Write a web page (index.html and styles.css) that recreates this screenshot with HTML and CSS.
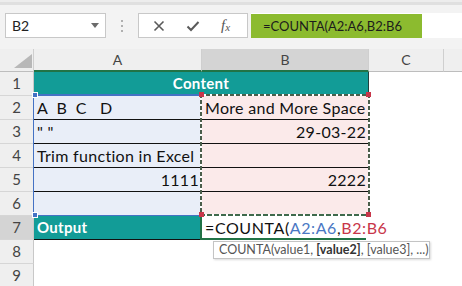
FILE: index.html
```html
<!DOCTYPE html>
<html>
<head>
<meta charset="utf-8">
<link rel="stylesheet" href="styles.css">
</head>
<body>
<div class="toolbar">
  <div class="namebox"><span>B2</span><svg class="dd" width="8" height="5" viewBox="0 0 8 5"><path d="M0 0H8L4 5Z" fill="#6b6b6b"/></svg></div>
  <div class="sep"><i></i><i></i><i></i></div>
  <div class="fxbox">
    <svg width="12" height="12" viewBox="0 0 12 12"><path d="M1.5 1.5L10.5 10.5M10.5 1.5L1.5 10.5" stroke="#5a5a5a" stroke-width="1.6" fill="none"/></svg>
    <svg width="14" height="12" viewBox="0 0 14 12"><path d="M1.5 6.5L5 10L12.5 2" stroke="#5a5a5a" stroke-width="2" fill="none"/></svg>
    <span class="fx">f<sub>x</sub></span>
  </div>
  <div class="formula"><span class="fhl">=COUNTA(A2:A6,B2:B6</span></div>
</div>
<div class="sheet">
  <div class="corner"><svg width="18" height="14" viewBox="0 0 18 14"><path d="M18 0V14H0Z" fill="#b8b8b8"/></svg></div>
  <div class="ch act">A</div>
  <div class="ch act sel">B</div>
  <div class="ch">C</div>
  <div class="ch last"></div>

  <div class="rh">1</div>
  <div class="c title">Content</div>
  <div class="c"></div>
  <div class="c"></div>

  <div class="rh">2</div>
  <div class="c ca bb pre">A  B  C   D</div>
  <div class="c cb bb">More and More Space</div>
  <div class="c"></div>
  <div class="c"></div>

  <div class="rh">3</div>
  <div class="c ca bb">" "</div>
  <div class="c cb bb r">29-03-22</div>
  <div class="c"></div>
  <div class="c"></div>

  <div class="rh">4</div>
  <div class="c ca bb">Trim function in Excel</div>
  <div class="c cb bb"></div>
  <div class="c"></div>
  <div class="c"></div>

  <div class="rh">5</div>
  <div class="c ca bb r">1111</div>
  <div class="c cb bb r">2222</div>
  <div class="c"></div>
  <div class="c"></div>

  <div class="rh">6</div>
  <div class="c ca"></div>
  <div class="c cb"></div>
  <div class="c"></div>
  <div class="c"></div>

  <div class="rh sel">7</div>
  <div class="c out bb">Output</div>
  <div class="c edit">=COUNTA(<span class="rb">A2:A6</span>,<span class="rr">B2:B6</span></div>
  <div class="c"></div>
  <div class="c"></div>

  <div class="rh">8</div>
  <div class="c"></div>
  <div class="c"></div>
  <div class="c"></div>
  <div class="c"></div>

  <div class="rh">9</div>
  <div class="c"></div>
  <div class="c"></div>
  <div class="c"></div>
  <div class="c"></div>

  <div class="rng-a"></div>
  <div class="marq"></div>
  <div class="active"></div>
  <div class="hb h1"></div>
  <div class="hb h2"></div>
  <div class="hr h3"></div>
  <div class="hr h4"></div>
  <div class="hr h5"></div>
  <div class="hr h6"></div>
  <div class="tip">COUNTA(value1, <b>[value2]</b>, [value3], ...)</div>
</div>
</body>
</html>
```
FILE: styles.css
```css
body {
  margin: 0;
  width: 462px;
  height: 286px;
  overflow: hidden;
  background: #fff;
  font-family: Lato, "Noto Sans", sans-serif;
}
.toolbar {
  height: 49px;
  box-sizing: border-box;
  padding: 13px 0 0 5px;
  display: flex;
  align-items: flex-start;
  background: linear-gradient(#ededed 0 2px, #e0e0e0 2px 5px, #f3f3f3 5px);
}
.namebox {
  width: 101px;
  height: 25px;
  box-sizing: border-box;
  background: #fff;
  border: 1px solid #c8c8c8;
  display: flex;
  align-items: center;
  justify-content: space-between;
  padding: 0 6px 0 6px;
  font-size: 14px;
  color: #222;
}
.sep {
  width: 2px;
  margin: 7px 15px 0 15px;
  display: flex;
  flex-direction: column;
  gap: 3px;
}
.sep i {
  width: 2px;
  height: 2px;
  background: #b0b0b0;
}
.fxbox {
  width: 110px;
  height: 25px;
  box-sizing: border-box;
  background: #fff;
  border: 1px solid #c8c8c8;
  display: flex;
  align-items: center;
  padding-left: 14px;
  gap: 21px;
}
.fx {
  font-family: "Liberation Serif", serif;
  font-style: italic;
  font-size: 15px;
  color: #555;
  margin-left: 0;
}
.fx sub {
  font-size: 11px;
  vertical-align: -1px;
}
.formula {
  flex: 1;
  height: 25px;
  margin-left: 3px;
  background: #fff;
  display: flex;
  align-items: flex-end;
}
.fhl {
  width: 171px;
  height: 24px;
  box-sizing: border-box;
  background: #8cbb2f;
  padding-left: 12px;
  font-size: 13px;
  line-height: 24px;
  color: #1c1c1c;
}
.sheet {
  position: relative;
  display: grid;
  grid-template-columns: 34px 168px 167px 75px 1fr;
  grid-template-rows: 23px repeat(9, 24px);
}
.corner {
  background: #efefef;
  border-right: 1px solid #cfcfcf;
  border-bottom: 1px solid #bdbdbd;
  box-sizing: border-box;
  display: flex;
  align-items: flex-end;
  justify-content: flex-end;
  padding: 0 1px 3px 0;
}
.ch {
  background: #efefef;
  border-right: 1px solid #cfcfcf;
  border-bottom: 1px solid #bdbdbd;
  box-sizing: border-box;
  text-align: center;
  font-size: 14px;
  line-height: 22px;
  color: #444;
}
.ch.act {
  border-bottom: 2px solid #217346;
  line-height: 21px;
}
.ch.sel {
  background: #d4d4d4;
}
.ch.last {
  border-right: none;
}
.rh {
  background: #efefef;
  border-right: 1px solid #c8c8c8;
  border-bottom: 1px solid #d6d6d6;
  box-sizing: border-box;
  text-align: center;
  font-size: 15px;
  line-height: 23px;
  color: #444;
}
.rh.sel {
  background: #d4d4d4;
}
.c {
  box-sizing: border-box;
  font-size: 16px;
  line-height: 23px;
  padding: 0 3px;
  white-space: nowrap;
  overflow: hidden;
  color: #111;
  letter-spacing: 0.3px;
}
.pre {
  white-space: pre;
}
.r {
  text-align: right;
}
.ca {
  background: #e9eef8;
}
.cb {
  background: #fbeaea;
}
.bb {
  border-bottom: 1px solid #111;
}
.title {
  grid-column: span 2;
  background: #129c97;
  border-right: 1px solid #20403e;
  color: #fff;
  font-weight: 700;
  text-align: center;
  font-size: 15px;
}
.out {
  background: #129c97;
  color: #fff;
  font-weight: 700;
  font-size: 15px;
}
.edit {
  overflow: visible;
  position: relative;
  z-index: 2;
  padding-left: 3px;
  letter-spacing: 0.6px;
}
.rb {
  color: #4a78c4;
}
.rr {
  color: #c8364a;
}
.rng-a {
  position: absolute;
  left: 33px;
  top: 45px;
  width: 169px;
  height: 122px;
  box-sizing: border-box;
  border: 1px solid #4472c4;
  border-top-width: 2px;
}
.marq {
  position: absolute;
  left: 200px;
  top: 45px;
  width: 170px;
  height: 122px;
  z-index: 3;
  background:
    repeating-linear-gradient(90deg, #4a5e4b 0 4px, #fff 4px 6px) left top / 100% 2px no-repeat,
    repeating-linear-gradient(90deg, #3f6a4c 0 5px, #fff 5px 7px) left bottom / 100% 2px no-repeat,
    repeating-linear-gradient(180deg, #4a5e4b 0 4px, #fff 4px 6px) left top / 2px 100% no-repeat,
    repeating-linear-gradient(180deg, #4a5e4b 0 4px, #fff 4px 6px) right top / 2px 100% no-repeat;
}
.active {
  position: absolute;
  left: 200px;
  top: 165px;
  width: 166px;
  height: 26px;
  box-sizing: border-box;
  border: 2px solid #217346;
  border-right: none;
  z-index: 2;
}
.hb, .hr {
  position: absolute;
  width: 4px;
  height: 4px;
  z-index: 4;
}
.hb {
  background: #4472c4;
  border: 1px solid #fff;
}
.hr {
  background: #c8364a;
  width: 5px;
  height: 5px;
}
.h1 { left: 32px; top: 43px; }
.h2 { left: 32px; top: 163px; }
.h3 { left: 199px; top: 43px; }
.h4 { left: 366px; top: 43px; }
.h5 { left: 199px; top: 163px; }
.h6 { left: 366px; top: 163px; }
.tip {
  position: absolute;
  left: 213px;
  top: 192px;
  width: 217px;
  height: 18px;
  box-sizing: border-box;
  background: #fff;
  border: 1px solid #c4c4c4;
  box-shadow: 1px 1px 2px rgba(0, 0, 0, 0.15);
  padding-left: 5px;
  font-size: 12.5px;
  line-height: 16px;
  color: #555;
  white-space: nowrap;
  z-index: 5;
}
.tip b {
  color: #333;
}
```
